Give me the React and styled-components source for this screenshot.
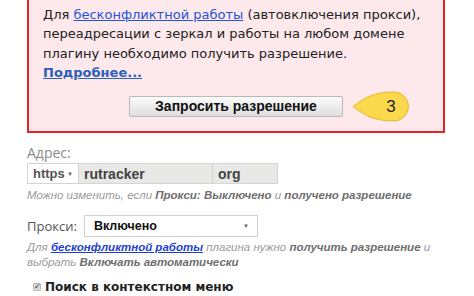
import React from 'react';
import styled, { createGlobalStyle } from 'styled-components';

const Global = createGlobalStyle`
	html, body {
		margin: 0;
		background: #fff;
	}
	body {
		font-family: 'DejaVu Sans', Verdana, sans-serif;
	}
`;

const Page = styled.div`
	width: 474px;
	height: 296px;
	overflow: hidden;
	padding: 0 0 0 27px;
	box-sizing: border-box;
`;

const Notice = styled.div`
	width: 418px;
	box-sizing: border-box;
	background: #fde8ec;
	border: 2px solid #e3252b;
	border-top: 0;
	padding: 5px 14px 14px 14px;
	font-size: 13px;
	line-height: 19.3px;
	color: #222;
`;

const Link = styled.a`
	color: ${(p) => (p.strong ? '#2b5fb8' : '#2255dd')};
	font-weight: ${(p) => (p.strong ? 700 : 400)};
	text-decoration: underline;
`;

const ButtonRow = styled.div`
	position: relative;
	display: flex;
	justify-content: center;
	margin-top: 14px;
`;

const Button = styled.div`
	width: 214px;
	height: 21px;
	box-sizing: border-box;
	border: 1px solid #b9b9b9;
	border-radius: 2px;
	background: linear-gradient(#fbfbfb, #dedede);
	font-family: 'Liberation Sans', Arial, sans-serif;
	font-weight: 700;
	font-size: 14px;
	color: #111;
	display: flex;
	align-items: center;
	justify-content: center;
`;

const Badge = styled.div`
	position: absolute;
	left: 309px;
	top: -5px;
	width: 58px;
	height: 31px;
	svg {
		display: block;
	}
`;

const Label = styled.div`
	font-family: 'Open Sans', sans-serif;
	font-size: ${(p) => p.size || 14}px;
	color: ${(p) => p.color || '#8a8a8a'};
`;

const AddressLabel = styled(Label)`
	margin-top: 10px;
	line-height: 20px;
`;

const InputRow = styled.div`
	display: flex;
	height: 21px;
`;

const Field = styled.div`
	width: ${(p) => p.w}px;
	box-sizing: border-box;
	border: 1px solid #d4d4d4;
	margin-left: ${(p) => (p.first ? 0 : -1)}px;
	background: ${(p) => (p.disabled ? '#e8e8e6' : '#fff')};
	font-family: 'Liberation Sans', Arial, sans-serif;
	font-weight: 700;
	font-size: ${(p) => p.size || 14}px;
	color: ${(p) => (p.disabled ? '#444' : '#555')};
	display: flex;
	align-items: center;
	justify-content: space-between;
	padding: 0 5px 0 ${(p) => p.pl || 6}px;
`;

const Arrow = styled.span`
	font-size: 6px;
	color: #666;
`;

const Hint = styled.div`
	font-family: 'Liberation Sans', Arial, sans-serif;
	font-style: italic;
	font-size: 11.5px;
	line-height: 15.5px;
	color: #9a9a9a;
	margin-top: ${(p) => p.mt || 0}px;
	b {
		color: #6e6e6e;
	}
	a {
		color: #1d3fd0;
		font-weight: 700;
		text-decoration: underline;
	}
`;

const ProxyRow = styled.div`
	display: flex;
	align-items: center;
	gap: 8px;
	margin-top: 11px;
`;

const Select = styled(Field)`
	width: 174px;
	height: 22px;
	border-color: #d0d0d0;
	color: #111;
	font-size: 12.5px;
	padding-left: 9px;
	padding-right: 8px;
`;

const CheckRow = styled.div`
	display: flex;
	align-items: center;
	gap: 4px;
	margin-top: 9px;
	padding-left: 6px;
	font-weight: 700;
	font-size: 12px;
	color: #222;
`;

const Check = styled.div`
	width: 8px;
	height: 8px;
	border-radius: 1px;
	background: #d8d8d8;
	border: 1px solid #bbb;
	box-sizing: border-box;
	font-size: 8px;
	line-height: 6px;
	color: #333;
	text-align: center;
`;

const App = () => {
	return (
		<Page>
			<Global />
			<Notice>
				<div>
					Для <Link>бесконфликтной работы</Link> (автовключения прокси), переадресации с зеркал и работы на любом домене
					плагину необходимо получить разрешение.
				</div>
				<div>
					<Link strong>Подробнее...</Link>
				</div>
				<ButtonRow>
					<Button>Запросить разрешение</Button>
					<Badge>
						<svg width='58' height='31' viewBox='0 0 58 31'>
							<path
								d='M1 15.5 C 12 7, 22 1, 42 1 A14.5 14.5 0 1 1 42 30 C 22 30, 12 24, 1 15.5 Z'
								fill='#fbd84c'
								stroke='#e2bb2a'
								strokeWidth='1'
							/>
							<text x='39' y='21' fontSize='17' fontFamily='Liberation Sans, Arial, sans-serif' fill='#222' textAnchor='middle'>
								3
							</text>
						</svg>
					</Badge>
				</ButtonRow>
			</Notice>
			<AddressLabel>Адрес:</AddressLabel>
			<InputRow>
				<Field w={52} first size={13} pl={5}>
					https <Arrow>▼</Arrow>
				</Field>
				<Field w={135} disabled pl={5}>
					rutracker
				</Field>
				<Field w={66} disabled pl={5}>
					org
				</Field>
			</InputRow>
			<Hint mt={4}>
				Можно изменить, если <b>Прокси: Выключено</b> и <b>получено разрешение</b>
			</Hint>
			<ProxyRow>
				<Label size={13} color='#555'>
					Прокси:
				</Label>
				<Select>
					Включено <Arrow>▼</Arrow>
				</Select>
			</ProxyRow>
			<Hint mt={3}>
				Для <a>бесконфликтной работы</a> плагина нужно <b>получить разрешение</b> и
				<br />
				выбрать <b>Включать автоматически</b>
			</Hint>
			<CheckRow>
				<Check>✓</Check>
				Поиск в контекстном меню
			</CheckRow>
		</Page>
	);
};

export default App;
